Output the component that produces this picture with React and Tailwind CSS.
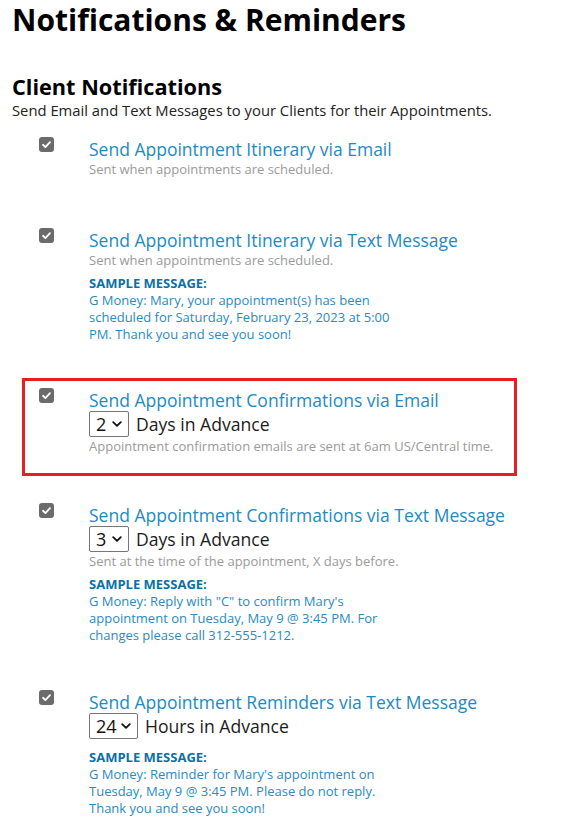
import { useState } from "react";

const notifications = [
  {
    id: "itinerary-email",
    title: "Send Appointment Itinerary via Email",
    note: "Sent when appointments are scheduled.",
  },
  {
    id: "itinerary-text",
    title: "Send Appointment Itinerary via Text Message",
    note: "Sent when appointments are scheduled.",
    sample:
      "G Money: Mary, your appointment(s) has been scheduled for Saturday, February 23, 2023 at 5:00 PM. Thank you and see you soon!",
  },
  {
    id: "confirm-email",
    title: "Send Appointment Confirmations via Email",
    advance: { value: "2", options: ["1", "2", "3", "4", "5"], unit: "Days in Advance" },
    note: "Appointment confirmation emails are sent at 6am US/Central time.",
    highlight: true,
  },
  {
    id: "confirm-text",
    title: "Send Appointment Confirmations via Text Message",
    advance: { value: "3", options: ["1", "2", "3", "4", "5"], unit: "Days in Advance" },
    note: "Sent at the time of the appointment, X days before.",
    sample:
      'G Money: Reply with "C" to confirm Mary\'s appointment on Tuesday, May 9 @ 3:45 PM. For changes please call 312-555-1212.',
  },
  {
    id: "reminder-text",
    title: "Send Appointment Reminders via Text Message",
    advance: { value: "24", options: ["2", "4", "12", "24", "48"], unit: "Hours in Advance", wide: true },
    sample:
      "G Money: Reminder for Mary's appointment on Tuesday, May 9 @ 3:45 PM. Please do not reply. Thank you and see you soon!",
  },
];

function CheckBox({ checked, onChange }) {
  return (
    <button
      type="button"
      onClick={onChange}
      className={`mt-[-1px] grid h-[15px] w-[15px] shrink-0 place-items-center rounded-[3px] ${
        checked ? "bg-[#6b6b6b]" : "border border-[#767676] bg-white"
      }`}
    >
      {checked ? (
        <svg viewBox="0 0 12 12" className="h-[11px] w-[11px]">
          <path d="M2.2 6.3 4.8 8.8 9.8 3.4" fill="none" stroke="white" strokeWidth="2" strokeLinecap="round" strokeLinejoin="round" />
        </svg>
      ) : null}
    </button>
  );
}

function AdvanceSelect({ advance }) {
  const [value, setValue] = useState(advance.value);
  return (
    <div className="flex h-[26px] items-center gap-[7px]">
      <div className="relative">
        <select
          value={value}
          onChange={(e) => setValue(e.target.value)}
          className={`block h-[26px] appearance-none rounded-[2px] border border-[#767676] bg-white pl-[6px] text-[18px] leading-[24px] text-[#111] ${
            advance.wide ? "w-[49px]" : "w-[40px]"
          }`}
        >
          {advance.options.map((o) => (
            <option key={o} value={o}>
              {o}
            </option>
          ))}
        </select>
        <svg
          viewBox="0 0 10 6"
          className="pointer-events-none absolute right-[7px] top-1/2 h-[6px] w-[10px] -translate-y-1/2"
        >
          <path d="M1.2 1.2 5 4.8 8.8 1.2" fill="none" stroke="#111" strokeWidth="1.8" strokeLinecap="round" strokeLinejoin="round" />
        </svg>
      </div>
      <span className="text-[17.6px] leading-[26px] text-[#1b1b1b]">{advance.unit}</span>
    </div>
  );
}

function NotificationRow({ item }) {
  const [checked, setChecked] = useState(true);
  return (
    <div className="flex items-start gap-[35px]">
      <CheckBox checked={checked} onChange={() => setChecked(!checked)} />
      <div className="min-w-0">
        <div className="text-[17.5px] leading-[22px] text-[#1d8ac4]">{item.title}</div>
        {item.advance ? <AdvanceSelect advance={item.advance} /> : null}
        {item.note ? <div className="text-[13px] leading-[18px] text-[#9a9a9a]">{item.note}</div> : null}
        {item.sample ? (
          <div className={`w-[306px] text-[13px] leading-[17px] ${item.note ? "mt-[6px]" : "mt-[10px]"}`}>
            <div className="font-bold text-[#0b6fa8]">SAMPLE MESSAGE:</div>
            <div className="text-[#2a8ac3]">{item.sample}</div>
          </div>
        ) : null}
      </div>
    </div>
  );
}

export default function App() {
  return (
    <div className="min-h-[836px] bg-white px-[12px] font-['Open_Sans',sans-serif] text-black">
      <h1 className="text-[30px] font-bold leading-[40px]">Notifications &amp; Reminders</h1>

      <h2 className="mt-[35px] text-[21.7px] font-bold leading-[24px]">Client Notifications</h2>
      <p className="mt-[1px] text-[14.8px] leading-[20px] text-[#222]">
        Send Email and Text Messages to your Clients for their Appointments.
      </p>

      <div className="mt-[18px]">
        {notifications.map((item, i) =>
          item.highlight ? (
            <div
              key={item.id}
              className="mb-[28px] ml-[10px] mt-[-12px] w-[495px] border-[3px] border-[#ec1c24] pb-[18px] pl-[14px] pt-[8px]"
            >
              <NotificationRow item={item} />
            </div>
          ) : (
            <div key={item.id} className={`pl-[27px] ${i === 0 ? "mb-[51px]" : "mb-[47px]"}`}>
              <NotificationRow item={item} />
            </div>
          )
        )}
      </div>
    </div>
  );
}
